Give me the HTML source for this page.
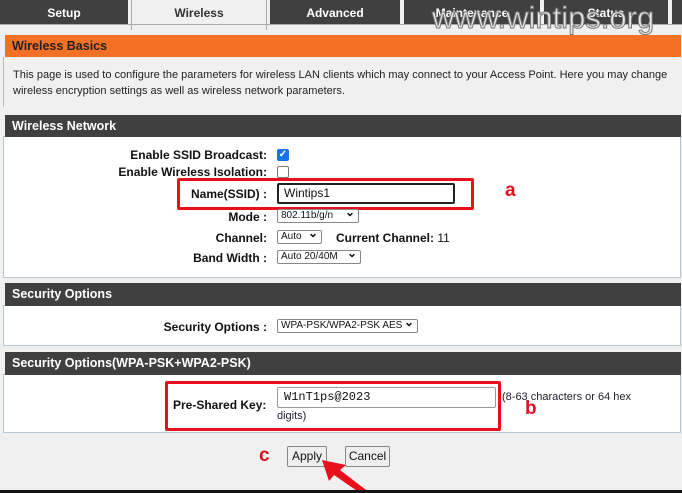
<!DOCTYPE html>
<html><head><meta charset="utf-8"><style>
*{margin:0;padding:0;box-sizing:border-box}
body{width:682px;height:493px;position:relative;overflow:hidden;background:#f0f0f0;font-family:"Liberation Sans",sans-serif;font-size:12px;color:#111}
.a{position:absolute}
.tab{position:absolute;top:0;height:24px;background:#404040;color:#fff;font-weight:bold;font-size:12px;text-align:center;line-height:26px}
.hdr{position:absolute;left:5px;width:676px;background:#404040;color:#fff;font-weight:bold;font-size:12.5px;padding-left:7px}
.box{position:absolute;left:3px;width:678px;background:#fff;border:1px solid #b8c4d0}
.lbl{position:absolute;font-weight:bold;text-align:right;right:415px;white-space:nowrap}
.sel{position:absolute;height:14px;border:1px solid #888;border-radius:2px;background:#fff;font-size:10px;line-height:12px;padding-left:3px;white-space:nowrap}
.sel:after{content:"⌄";position:absolute;right:3px;top:-4px;font-weight:bold;font-size:12px}
.red{position:absolute;border:3px solid #e8101a;border-radius:2px}
.btn{position:absolute;border:1px solid #888;border-radius:2px;background:#eee;height:21px;line-height:19px;text-align:center;font-size:12px}
.mark{position:absolute;color:#e01020;font-weight:bold;font-size:19px}
</style></head><body>
<div class="tab" style="left:0;width:128px">Setup</div>
<div class="a" style="left:131px;top:0;width:136px;height:30px;background:#f0f0f0;border-left:1px solid #aaa;border-right:1px solid #aaa;text-align:center;font-weight:bold;font-size:12px;line-height:26px;color:#333">Wireless</div>
<div class="tab" style="left:270px;width:130px">Advanced</div>
<div class="tab" style="left:404px;width:136px">Maintenance</div>
<div class="tab" style="left:544px;width:124px">Status</div>
<div class="tab" style="left:672px;width:10px"></div>
<div class="a" style="left:0;top:24px;width:682px;height:1px;background:#aaa"></div>
<div class="a" style="left:432px;top:0px;font-size:31px;color:#e8e8e8;-webkit-text-stroke:1px #777">www.wintips.org</div>
<div class="a" style="left:5px;top:35px;width:676px;height:22px;background:#f47024;font-weight:bold;font-size:12.5px;line-height:22px;padding-left:7px;color:#222">Wireless Basics</div>
<div class="a" style="left:13px;top:67px;width:660px;font-size:11px;line-height:16px;color:#222">This page is used to configure the parameters for wireless LAN clients which may connect to your Access Point. Here you may change wireless encryption settings as well as wireless network parameters.</div>
<div class="a" style="left:3px;top:57px;width:1px;height:50px;background:#bbb"></div>

<div class="box" style="top:136px;height:142px"></div>
<div class="hdr" style="top:115px;height:22px;line-height:22px">Wireless Network</div>
<div class="lbl" style="top:148px">Enable SSID Broadcast:</div>
<div class="a" style="left:277px;top:149px;width:12px;height:12px;background:#1a73e8;border-radius:2px;color:#fff;font-size:10px;line-height:12px;text-align:center;font-weight:bold">✓</div>
<div class="lbl" style="top:165px">Enable Wireless Isolation:</div>
<div class="a" style="left:277px;top:166px;width:12px;height:12px;border:1px solid #777;border-radius:2px;background:#fff"></div>
<div class="red" style="left:177px;top:178px;width:297px;height:32px"></div>
<div class="lbl" style="top:187px">Name(SSID) :</div>
<div class="a" style="left:277px;top:183px;width:178px;height:21px;border:2px solid #222;border-radius:2px;background:#fff;padding-left:5px;line-height:17px;font-size:12px">Wintips1</div>
<div class="mark" style="left:505px;top:180px">a</div>
<div class="lbl" style="top:210px">Mode :</div>
<div class="sel" style="left:277px;top:209px;width:82px">802.11b/g/n</div>
<div class="lbl" style="top:231px">Channel:</div>
<div class="sel" style="left:277px;top:230px;width:45px">Auto</div>
<div class="a" style="left:336px;top:231px;font-weight:bold">Current Channel: <span style="font-weight:normal">11</span></div>
<div class="lbl" style="top:251px">Band Width :</div>
<div class="sel" style="left:277px;top:250px;width:84px">Auto 20/40M</div>

<div class="box" style="top:305px;height:41px"></div>
<div class="hdr" style="top:283px;height:23px;line-height:23px">Security Options</div>
<div class="lbl" style="top:320px">Security Options :</div>
<div class="sel" style="left:277px;top:319px;width:141px">WPA-PSK/WPA2-PSK AES</div>

<div class="box" style="top:374px;height:59px"></div>
<div class="hdr" style="top:352px;height:23px;line-height:23px">Security Options(WPA-PSK+WPA2-PSK)</div>
<div class="red" style="left:165px;top:381px;width:336px;height:50px"></div>
<div class="a" style="left:173px;top:398px;font-weight:bold">Pre-Shared Key:</div>
<div class="a" style="left:277px;top:387px;width:219px;height:21px;border:1px solid #999;border-radius:2px;background:#fff;padding-left:6px;line-height:19px;font-family:'Liberation Mono',monospace;font-size:12px">W1nT1ps@2023</div>
<div class="a" style="left:502px;top:391px;font-size:11px;color:#223">(8-63 characters or 64 hex</div>
<div class="a" style="left:277px;top:410px;font-size:11px;color:#223">digits)</div>
<div class="mark" style="left:525px;top:398px">b</div>

<div class="mark" style="left:259px;top:445px">c</div>
<div class="btn" style="left:287px;top:446px;width:40px">Apply</div>
<div class="btn" style="left:345px;top:446px;width:45px">Cancel</div>
<svg class="a" style="left:310px;top:455px" width="70" height="38"><polygon points="12,5 36,10 30,15 60,38 50,38 24,20 19,26" fill="#e8101a"/></svg>
<div class="a" style="left:0;top:490px;width:682px;height:3px;background:#111"></div>
</body></html>
